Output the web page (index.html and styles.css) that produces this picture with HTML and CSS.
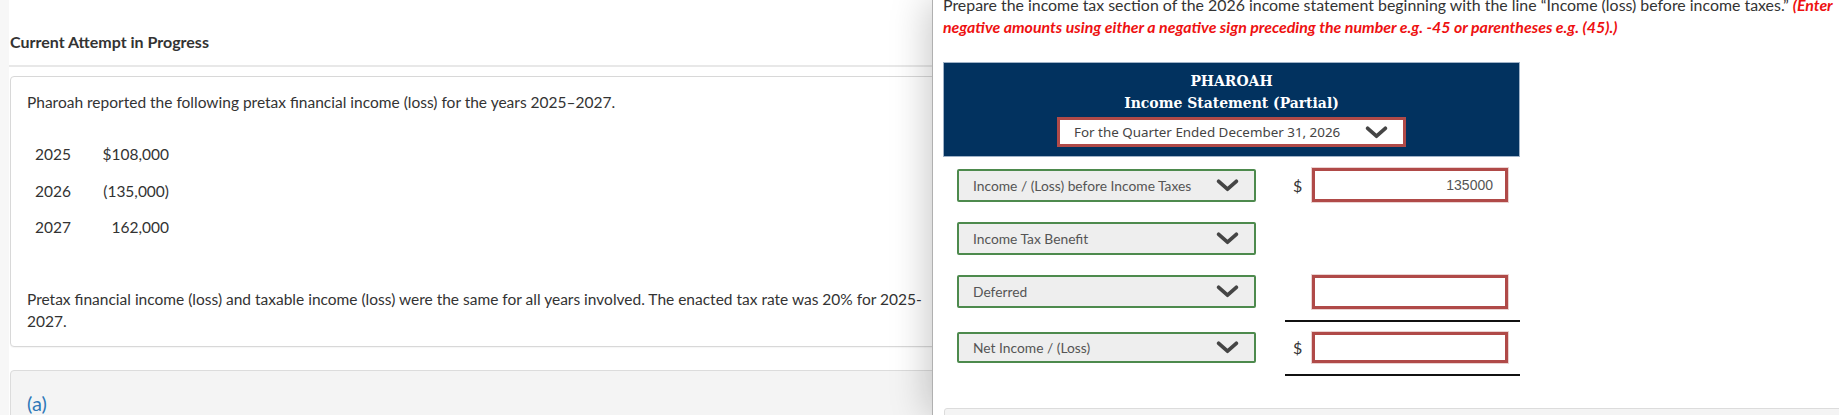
FILE: index.html
```html
<!DOCTYPE html>
<html lang="en">
<head>
<meta charset="utf-8">
<title>Current Attempt in Progress</title>
<link rel="stylesheet" href="styles.css">
</head>
<body>
<div class="app">
  <div class="rail"></div>
  <main class="lesson">
    <h2 class="attempt-title">Current Attempt in Progress</h2>
    <div class="divider"></div>
    <section class="card">
      <p class="para">Pharoah reported the following pretax financial income (loss) for the years 2025–2027.</p>
      <div class="years">
        <span class="yr">2025</span><span class="amt">$108,000</span>
        <span class="yr">2026</span><span class="amt">(135,000)</span>
        <span class="yr">2027</span><span class="amt">162,000</span>
      </div>
      <p class="para para-last">Pretax financial income (loss) and taxable income (loss) were the same for all years involved. The enacted tax rate was 20% for 2025-2027.</p>
    </section>
    <section class="card card-part">
      <div class="part-label">(a)</div>
    </section>
  </main>

  <aside class="drawer">
    <p class="instructions">Prepare the income tax section of the 2026 income statement beginning with the line “Income (loss) before income taxes.” <em class="hint">(Enter negative amounts using either a negative sign preceding the number e.g. -45 or parentheses e.g. (45).)</em></p>

    <div class="stmt">
      <div class="stmt-head">
        <div class="stmt-title">PHAROAH</div>
        <div class="stmt-title">Income Statement (Partial)</div>
        <div class="period">
          <span>For the Quarter Ended December 31, 2026</span>
          <svg class="chev" viewBox="0 0 24 14" aria-hidden="true"><polyline points="2.5,2.5 12,11 21.5,2.5"/></svg>
        </div>
      </div>

      <div class="row row-first">
        <div class="sel-cell">
          <div class="select select-first"><span>Income / (Loss) before Income Taxes</span><svg class="chev" viewBox="0 0 24 14" aria-hidden="true"><polyline points="2.5,2.5 12,11 21.5,2.5"/></svg></div>
        </div>
        <div class="amt-cell"><span class="cur">$</span><div class="input">135000</div></div>
      </div>

      <div class="row row-gap">
        <div class="sel-cell">
          <div class="select"><span>Income Tax Benefit</span><svg class="chev" viewBox="0 0 24 14" aria-hidden="true"><polyline points="2.5,2.5 12,11 21.5,2.5"/></svg></div>
        </div>
        <div class="amt-cell"></div>
      </div>

      <div class="row row-gap">
        <div class="sel-cell">
          <div class="select"><span>Deferred</span><svg class="chev" viewBox="0 0 24 14" aria-hidden="true"><polyline points="2.5,2.5 12,11 21.5,2.5"/></svg></div>
        </div>
        <div class="amt-cell"><span class="cur"></span><div class="input"></div></div>
      </div>

      <div class="rule rule-a"></div>

      <div class="row row-net">
        <div class="sel-cell">
          <div class="select select-short"><span>Net Income / (Loss)</span><svg class="chev" viewBox="0 0 24 14" aria-hidden="true"><polyline points="2.5,2.5 12,11 21.5,2.5"/></svg></div>
        </div>
        <div class="amt-cell"><span class="cur">$</span><div class="input input-short"></div></div>
      </div>

      <div class="rule rule-b"></div>
    </div>

    <div class="next-panel"></div>
  </aside>
</div>
</body>
</html>
```

FILE: styles.css
```css
* { box-sizing: border-box; }

html, body {
  margin: 0;
  padding: 0;
  background: #ffffff;
  font-family: Lato, "Open Sans", "Liberation Sans", sans-serif;
  color: #333333;
}

.app {
  display: flex;
  position: relative;
  width: 1839px;
  height: 415px;
  overflow: hidden;
  background: #ffffff;
}

.rail {
  width: 9px;
  flex: 0 0 9px;
  background: #f7f7f7;
}

.lesson {
  width: 936px;
  flex: 0 0 936px;
  padding-left: 1px;
}

.attempt-title {
  margin: 0;
  padding-top: 32px;
  font-size: 16px;
  line-height: 20px;
  font-weight: 700;
  color: #333333;
}

.divider {
  margin-top: 13px;
  margin-left: -1px;
  height: 2px;
  background: #e8e8e8;
}

.card {
  margin-top: 9px;
  border: 1px solid #d8d8d8;
  border-radius: 4px;
  padding: 14px 16px 14px 16px;
  background: #ffffff;
  box-shadow: 0 1px 1px rgba(0,0,0,0.04);
}

.para {
  margin: 0;
  font-size: 15.5px;
  line-height: 22px;
  color: #333333;
}

.years {
  display: grid;
  grid-template-columns: 52px 82px;
  row-gap: 14.5px;
  margin: 30px 0 0 8px;
  font-size: 15.5px;
  line-height: 22px;
}

.years .amt { text-align: right; }

.para-last { margin-top: 50px; }

.card-part {
  margin-top: 23px;
  background: #f4f4f4;
  border-color: #dcdcdc;
  padding-top: 18px;
  height: 80px;
}

.part-label {
  font-size: 20px;
  line-height: 28px;
  color: #2f78b8;
}

/* Drawer overlaying the lesson */
.drawer {
  position: absolute;
  top: 0;
  left: 932px;
  right: 0;
  bottom: 0;
  background: #ffffff;
  border-left: 1px solid #b0b0b0;
  box-shadow: -4px 0 36px rgba(0,0,0,0.22);
  padding: 0 0 0 10px;
}

.instructions {
  margin: -6px 0 0 0;
  font-size: 15.9px;
  line-height: 22px;
  color: #333333;
}

.hint {
  color: #ee1111;
  font-weight: 700;
  font-style: italic;
}

.stmt {
  width: 577px;
  margin-top: 24px;
}

.stmt-head {
  background: #02325f;
  border: 1px solid #9fb2c7;
  padding: 7px 0 9px;
  text-align: center;
  color: #ffffff;
}

.stmt-title {
  font-family: "DejaVu Serif", "Liberation Serif", serif;
  font-stretch: condensed;
  font-weight: 700;
  font-size: 15.5px;
  line-height: 22px;
}

.period {
  display: flex;
  align-items: center;
  justify-content: space-between;
  width: 349px;
  height: 30px;
  margin: 3px auto 0;
  border: 3px solid #b04a48;
  background: #ffffff;
  padding: 0 15px 0 14px;
  font-family: "Noto Sans", "Open Sans", sans-serif;
  font-size: 13.4px;
  color: #444444;
  text-align: left;
}

.chev {
  width: 23px;
  height: 13px;
  flex: 0 0 23px;
}

.chev polyline {
  fill: none;
  stroke: #454545;
  stroke-width: 4;
  stroke-linecap: round;
  stroke-linejoin: round;
}

.row {
  display: flex;
  align-items: flex-start;
}

.row-first { margin-top: 11px; }
.row-gap { margin-top: 20px; }
.row-net { margin-top: 10px; }

.sel-cell {
  width: 342px;
  flex: 0 0 342px;
  padding-left: 14px;
}

.select {
  display: flex;
  align-items: center;
  justify-content: space-between;
  width: 299px;
  height: 33px;
  border: 2px solid #4d8a4d;
  border-radius: 2px;
  background: #eeeeee;
  padding: 0 15px 0 14px;
  font-size: 13.8px;
  color: #555555;
}

.select-first { margin-top: 1px; }
.select-short { height: 31px; }

.amt-cell {
  width: 235px;
  flex: 0 0 235px;
  display: flex;
  align-items: center;
  padding-left: 8px;
}

.cur {
  width: 10px;
  flex: 0 0 10px;
  font-size: 16px;
  color: #333333;
}

.input {
  width: 196px;
  height: 34px;
  margin-left: 9px;
  border: 3px solid #b04a48;
  box-shadow: 0 0 0 1px rgba(176,74,72,0.25);
  background: #ffffff;
  padding-right: 12px;
  text-align: right;
  font-family: "Liberation Sans", Arial, sans-serif;
  font-size: 14px;
  line-height: 28px;
  color: #555555;
}

.input-short { height: 31px; line-height: 25px; }

.rule {
  margin-left: 342px;
  width: 235px;
  height: 2px;
  background: #111111;
}

.rule-a { margin-top: 11px; }
.rule-b { margin-top: 11px; }

.next-panel {
  margin-top: 32px;
  margin-left: 1px;
  margin-right: -12px;
  height: 40px;
  background: #f4f4f4;
  border: 1px solid #dcdcdc;
  border-radius: 3px;
}
```
